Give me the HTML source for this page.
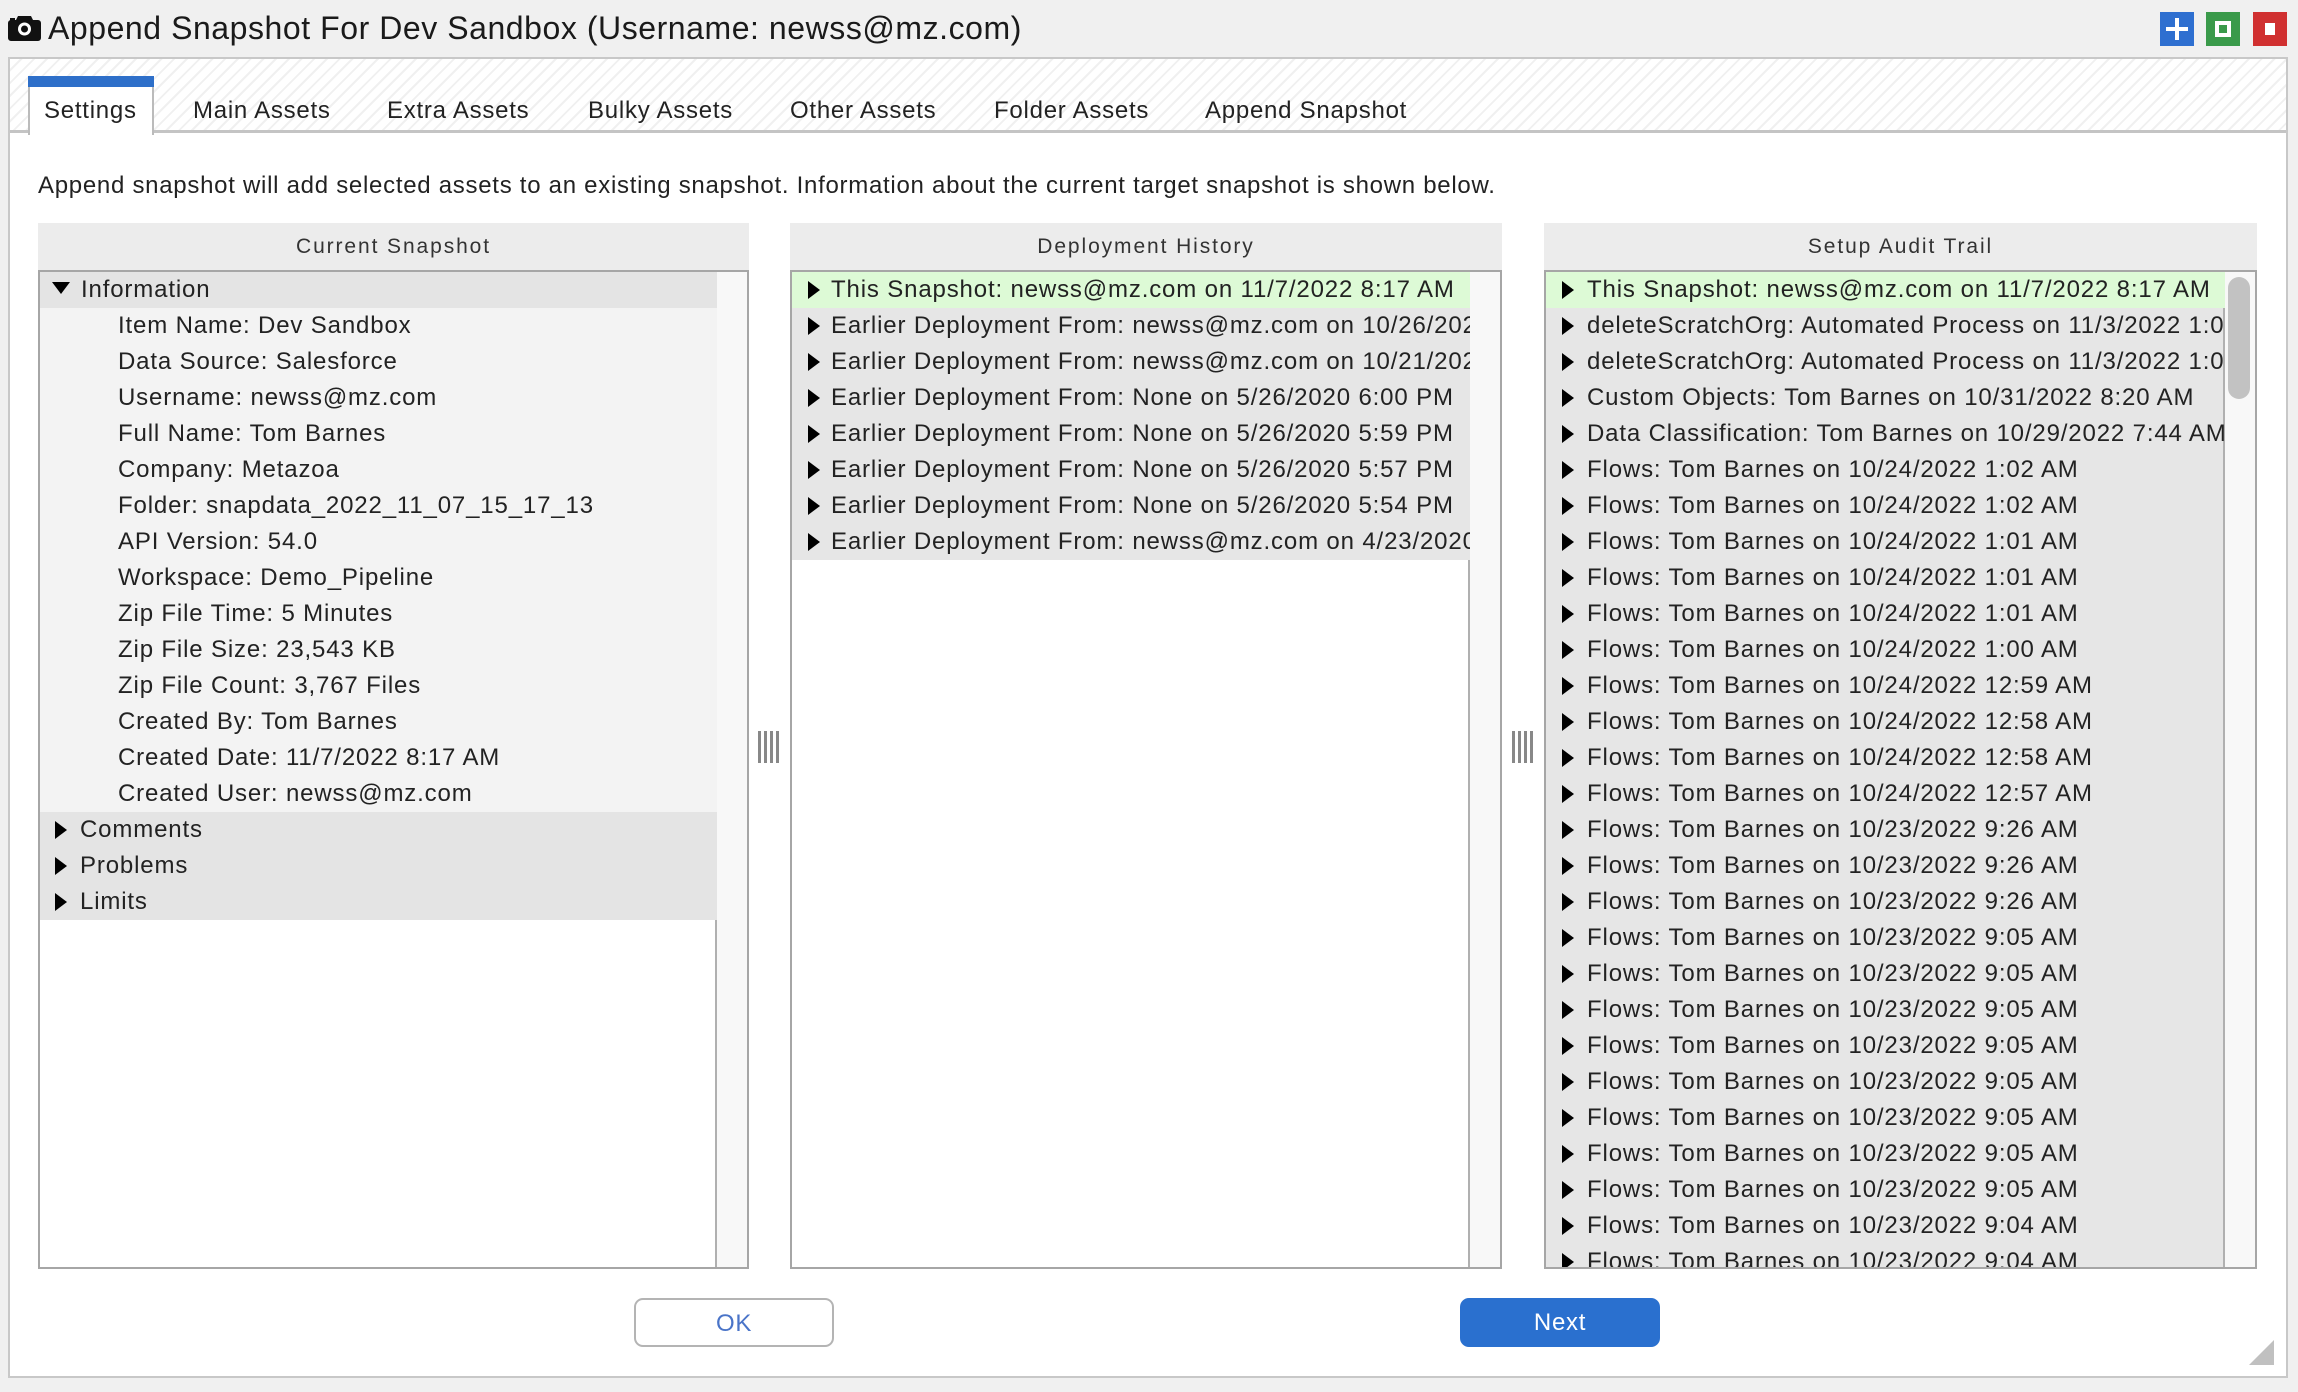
<!DOCTYPE html>
<html><head><meta charset="utf-8">
<style>
*{margin:0;padding:0;box-sizing:border-box}
body{width:2298px;height:1392px;background:#f0f0f0;font-family:"Liberation Sans",sans-serif;color:#222;position:relative;overflow:hidden}
.a{position:absolute}
.title{left:48px;top:10px;font-size:32px;color:#1a1a1a;white-space:nowrap;letter-spacing:0.55px}
.wb{top:12px;width:34px;height:34px}
.box{left:8px;top:57px;width:2280px;height:1321px;background:#fff;border:2px solid #c8c8c8}
.strip{left:10px;top:59px;width:2276px;height:74px;background:repeating-linear-gradient(135deg,#fff 0 7px,#f0f0f0 7px 9px);border-bottom:3px solid #c4c4c4}
.tab{top:111px;font-size:24px;color:#222;white-space:nowrap;transform:translateY(-50%);letter-spacing:0.75px}
.sel{left:28px;top:76px;width:126px;height:59px;background:#fff;border:2px solid #bbb;border-bottom:none;border-top:none}
.selbar{left:28px;top:76px;width:126px;height:11px;background:#2e6fc9}
.desc{left:38px;top:172px;font-size:24px;white-space:nowrap;letter-spacing:0.72px}
.ph{top:223px;height:47px;background:#ececec;font-size:21px;letter-spacing:1.9px;text-align:center;line-height:47px;color:#333}
.pl{top:270px;height:999px;background:#fff;border:2px solid #a6a6a6;overflow:hidden}
.sb{top:0;bottom:0;right:0;width:32px;background:#f8f8f8;border-left:2px solid #b0b0b0}
.row{position:absolute;left:0;height:36px;line-height:36px;font-size:24px;white-space:nowrap;overflow:hidden;letter-spacing:0.85px}
.tri{display:inline-block;width:0;height:0;border-top:9px solid transparent;border-bottom:9px solid transparent;border-left:12px solid #000;vertical-align:-2px}
.trd{display:inline-block;width:0;height:0;border-left:9px solid transparent;border-right:9px solid transparent;border-top:12px solid #000;vertical-align:3px}
.spl{width:22px;height:32px;top:731px;background:repeating-linear-gradient(90deg,#888 0 3px,transparent 3px 6px)}
.btn{top:1298px;width:200px;height:49px;border-radius:9px;font-size:24px;text-align:center;line-height:47px;letter-spacing:0.7px}
.m .row span+span{margin-left:11px!important}
</style></head><body>
<svg class="a" style="left:8px;top:13px" width="33" height="28" viewBox="0 0 33 28"><path d="M10 3h13l2 4h5a3 3 0 0 1 3 3v15a3 3 0 0 1-3 3H3a3 3 0 0 1-3-3V10a3 3 0 0 1 3-3h5z" fill="#111"/><rect x="2" y="5" width="5" height="3" fill="#111"/><circle cx="16.5" cy="16" r="6.5" fill="#fff"/><circle cx="16.5" cy="16" r="3.5" fill="#111"/></svg>
<div class="a title">Append Snapshot For Dev Sandbox (Username: newss@mz.com)</div>
<div class="a wb" style="left:2160px;background:#2e6fd0"><div class="a" style="left:6px;top:15px;width:22px;height:4px;background:#fff"></div><div class="a" style="left:15px;top:6px;width:4px;height:22px;background:#fff"></div></div>
<div class="a wb" style="left:2206px;background:#3a9a4a"><div class="a" style="left:9px;top:9px;width:16px;height:16px;border:4px solid #fff"></div></div>
<div class="a wb" style="left:2253px;background:#d03030"><div class="a" style="left:12px;top:11px;width:10px;height:12px;background:#fff"></div></div>

<div class="a box"></div>
<div class="a strip"></div>
<div class="a sel"></div>
<div class="a selbar"></div>
<div class="a tab" style="left:44px">Settings</div>
<div class="a tab" style="left:193px">Main Assets</div>
<div class="a tab" style="left:387px">Extra Assets</div>
<div class="a tab" style="left:588px">Bulky Assets</div>
<div class="a tab" style="left:790px">Other Assets</div>
<div class="a tab" style="left:994px">Folder Assets</div>
<div class="a tab" style="left:1205px">Append Snapshot</div>

<div class="a desc">Append snapshot will add selected assets to an existing snapshot. Information about the current target snapshot is shown below.</div>

<div class="a ph" style="left:38px;width:711px">Current Snapshot</div>
<div class="a ph" style="left:790px;width:712px">Deployment History</div>
<div class="a ph" style="left:1544px;width:713px">Setup Audit Trail</div>

<div class="a pl" style="left:38px;width:711px">
<div class="sb a"></div>
<div class="row" style="top:0;width:677px;background:#e4e4e4;padding-left:12px"><span class="trd"></span><span style="margin-left:11px">Information</span></div>
<div class="row" style="top:36px;width:677px;background:#f3f3f3;padding-left:78px">Item Name: Dev Sandbox</div>
<div class="row" style="top:72px;width:677px;background:#f3f3f3;padding-left:78px">Data Source: Salesforce</div>
<div class="row" style="top:108px;width:677px;background:#f3f3f3;padding-left:78px">Username: newss@mz.com</div>
<div class="row" style="top:144px;width:677px;background:#f3f3f3;padding-left:78px">Full Name: Tom Barnes</div>
<div class="row" style="top:180px;width:677px;background:#f3f3f3;padding-left:78px">Company: Metazoa</div>
<div class="row" style="top:216px;width:677px;background:#f3f3f3;padding-left:78px">Folder: snapdata_2022_11_07_15_17_13</div>
<div class="row" style="top:252px;width:677px;background:#f3f3f3;padding-left:78px">API Version: 54.0</div>
<div class="row" style="top:288px;width:677px;background:#f3f3f3;padding-left:78px">Workspace: Demo_Pipeline</div>
<div class="row" style="top:324px;width:677px;background:#f3f3f3;padding-left:78px">Zip File Time: 5 Minutes</div>
<div class="row" style="top:360px;width:677px;background:#f3f3f3;padding-left:78px">Zip File Size: 23,543 KB</div>
<div class="row" style="top:396px;width:677px;background:#f3f3f3;padding-left:78px">Zip File Count: 3,767 Files</div>
<div class="row" style="top:432px;width:677px;background:#f3f3f3;padding-left:78px">Created By: Tom Barnes</div>
<div class="row" style="top:468px;width:677px;background:#f3f3f3;padding-left:78px">Created Date: 11/7/2022 8:17 AM</div>
<div class="row" style="top:504px;width:677px;background:#f3f3f3;padding-left:78px">Created User: newss@mz.com</div>
<div class="row" style="top:540px;width:677px;background:#e4e4e4;padding-left:15px"><span class="tri"></span><span style="margin-left:13px">Comments</span></div>
<div class="row" style="top:576px;width:677px;background:#e4e4e4;padding-left:15px"><span class="tri"></span><span style="margin-left:13px">Problems</span></div>
<div class="row" style="top:612px;width:677px;background:#e4e4e4;padding-left:15px"><span class="tri"></span><span style="margin-left:13px">Limits</span></div>
</div>

<div class="a spl" style="left:758px"></div>
<div class="a spl" style="left:1512px"></div>

<div class="a pl m" style="left:790px;width:712px">
<div class="sb a"></div>
<div class="row" style="top:0;width:678px;background:#ddfad6;padding-left:16px"><span class="tri"></span><span style="margin-left:14px">This Snapshot: newss@mz.com on 11/7/2022 8:17 AM</span></div>
<div class="row" style="top:36px;width:678px;background:#e6e6e6;padding-left:16px"><span class="tri"></span><span style="margin-left:14px">Earlier Deployment From: newss@mz.com on 10/26/2022 9:00 AM</span></div>
<div class="row" style="top:72px;width:678px;background:#e6e6e6;padding-left:16px"><span class="tri"></span><span style="margin-left:14px">Earlier Deployment From: newss@mz.com on 10/21/2022 9:00 AM</span></div>
<div class="row" style="top:108px;width:678px;background:#e6e6e6;padding-left:16px"><span class="tri"></span><span style="margin-left:14px">Earlier Deployment From: None on 5/26/2020 6:00 PM</span></div>
<div class="row" style="top:144px;width:678px;background:#e6e6e6;padding-left:16px"><span class="tri"></span><span style="margin-left:14px">Earlier Deployment From: None on 5/26/2020 5:59 PM</span></div>
<div class="row" style="top:180px;width:678px;background:#e6e6e6;padding-left:16px"><span class="tri"></span><span style="margin-left:14px">Earlier Deployment From: None on 5/26/2020 5:57 PM</span></div>
<div class="row" style="top:216px;width:678px;background:#e6e6e6;padding-left:16px"><span class="tri"></span><span style="margin-left:14px">Earlier Deployment From: None on 5/26/2020 5:54 PM</span></div>
<div class="row" style="top:252px;width:678px;background:#e6e6e6;padding-left:16px"><span class="tri"></span><span style="margin-left:14px">Earlier Deployment From: newss@mz.com on 4/23/2020 9:00 AM</span></div>
</div>

<div class="a pl" style="left:1544px;width:713px;background:#e6e6e6">
<div class="sb a"><div class="a" style="left:3px;top:5px;width:22px;height:122px;border-radius:11px;background:#c2c2c2"></div></div>
<div class="row" style="top:0;width:679px;background:#ddfad6;padding-left:16px"><span class="tri"></span><span style="margin-left:13px">This Snapshot: newss@mz.com on 11/7/2022 8:17 AM</span></div>
<div class="row" style="top:36px;width:679px;padding-left:16px"><span class="tri"></span><span style="margin-left:13px">deleteScratchOrg: Automated Process on 11/3/2022 1:00 AM</span></div>
<div class="row" style="top:72px;width:679px;padding-left:16px"><span class="tri"></span><span style="margin-left:13px">deleteScratchOrg: Automated Process on 11/3/2022 1:00 AM</span></div>
<div class="row" style="top:108px;width:679px;padding-left:16px"><span class="tri"></span><span style="margin-left:13px">Custom Objects: Tom Barnes on 10/31/2022 8:20 AM</span></div>
<div class="row" style="top:144px;width:679px;padding-left:16px"><span class="tri"></span><span style="margin-left:13px">Data Classification: Tom Barnes on 10/29/2022 7:44 AM</span></div>
<div class="row" style="top:180px;width:679px;padding-left:16px"><span class="tri"></span><span style="margin-left:13px">Flows: Tom Barnes on 10/24/2022 1:02 AM</span></div>
<div class="row" style="top:216px;width:679px;padding-left:16px"><span class="tri"></span><span style="margin-left:13px">Flows: Tom Barnes on 10/24/2022 1:02 AM</span></div>
<div class="row" style="top:252px;width:679px;padding-left:16px"><span class="tri"></span><span style="margin-left:13px">Flows: Tom Barnes on 10/24/2022 1:01 AM</span></div>
<div class="row" style="top:288px;width:679px;padding-left:16px"><span class="tri"></span><span style="margin-left:13px">Flows: Tom Barnes on 10/24/2022 1:01 AM</span></div>
<div class="row" style="top:324px;width:679px;padding-left:16px"><span class="tri"></span><span style="margin-left:13px">Flows: Tom Barnes on 10/24/2022 1:01 AM</span></div>
<div class="row" style="top:360px;width:679px;padding-left:16px"><span class="tri"></span><span style="margin-left:13px">Flows: Tom Barnes on 10/24/2022 1:00 AM</span></div>
<div class="row" style="top:396px;width:679px;padding-left:16px"><span class="tri"></span><span style="margin-left:13px">Flows: Tom Barnes on 10/24/2022 12:59 AM</span></div>
<div class="row" style="top:432px;width:679px;padding-left:16px"><span class="tri"></span><span style="margin-left:13px">Flows: Tom Barnes on 10/24/2022 12:58 AM</span></div>
<div class="row" style="top:468px;width:679px;padding-left:16px"><span class="tri"></span><span style="margin-left:13px">Flows: Tom Barnes on 10/24/2022 12:58 AM</span></div>
<div class="row" style="top:504px;width:679px;padding-left:16px"><span class="tri"></span><span style="margin-left:13px">Flows: Tom Barnes on 10/24/2022 12:57 AM</span></div>
<div class="row" style="top:540px;width:679px;padding-left:16px"><span class="tri"></span><span style="margin-left:13px">Flows: Tom Barnes on 10/23/2022 9:26 AM</span></div>
<div class="row" style="top:576px;width:679px;padding-left:16px"><span class="tri"></span><span style="margin-left:13px">Flows: Tom Barnes on 10/23/2022 9:26 AM</span></div>
<div class="row" style="top:612px;width:679px;padding-left:16px"><span class="tri"></span><span style="margin-left:13px">Flows: Tom Barnes on 10/23/2022 9:26 AM</span></div>
<div class="row" style="top:648px;width:679px;padding-left:16px"><span class="tri"></span><span style="margin-left:13px">Flows: Tom Barnes on 10/23/2022 9:05 AM</span></div>
<div class="row" style="top:684px;width:679px;padding-left:16px"><span class="tri"></span><span style="margin-left:13px">Flows: Tom Barnes on 10/23/2022 9:05 AM</span></div>
<div class="row" style="top:720px;width:679px;padding-left:16px"><span class="tri"></span><span style="margin-left:13px">Flows: Tom Barnes on 10/23/2022 9:05 AM</span></div>
<div class="row" style="top:756px;width:679px;padding-left:16px"><span class="tri"></span><span style="margin-left:13px">Flows: Tom Barnes on 10/23/2022 9:05 AM</span></div>
<div class="row" style="top:792px;width:679px;padding-left:16px"><span class="tri"></span><span style="margin-left:13px">Flows: Tom Barnes on 10/23/2022 9:05 AM</span></div>
<div class="row" style="top:828px;width:679px;padding-left:16px"><span class="tri"></span><span style="margin-left:13px">Flows: Tom Barnes on 10/23/2022 9:05 AM</span></div>
<div class="row" style="top:864px;width:679px;padding-left:16px"><span class="tri"></span><span style="margin-left:13px">Flows: Tom Barnes on 10/23/2022 9:05 AM</span></div>
<div class="row" style="top:900px;width:679px;padding-left:16px"><span class="tri"></span><span style="margin-left:13px">Flows: Tom Barnes on 10/23/2022 9:05 AM</span></div>
<div class="row" style="top:936px;width:679px;padding-left:16px"><span class="tri"></span><span style="margin-left:13px">Flows: Tom Barnes on 10/23/2022 9:04 AM</span></div>
<div class="row" style="top:972px;width:679px;padding-left:16px"><span class="tri"></span><span style="margin-left:13px">Flows: Tom Barnes on 10/23/2022 9:04 AM</span></div>
</div>

<div class="a btn" style="left:634px;background:#fff;border:2px solid #b4b4b4;color:#4a74c8">OK</div>
<div class="a btn" style="left:1460px;background:#2a70cf;color:#fff;border:1px solid #2a70cf">Next</div>
<svg class="a" style="left:2249px;top:1340px" width="25" height="25"><polygon points="25,0 25,25 0,25" fill="#c0c0c0"/></svg>
</body></html>
